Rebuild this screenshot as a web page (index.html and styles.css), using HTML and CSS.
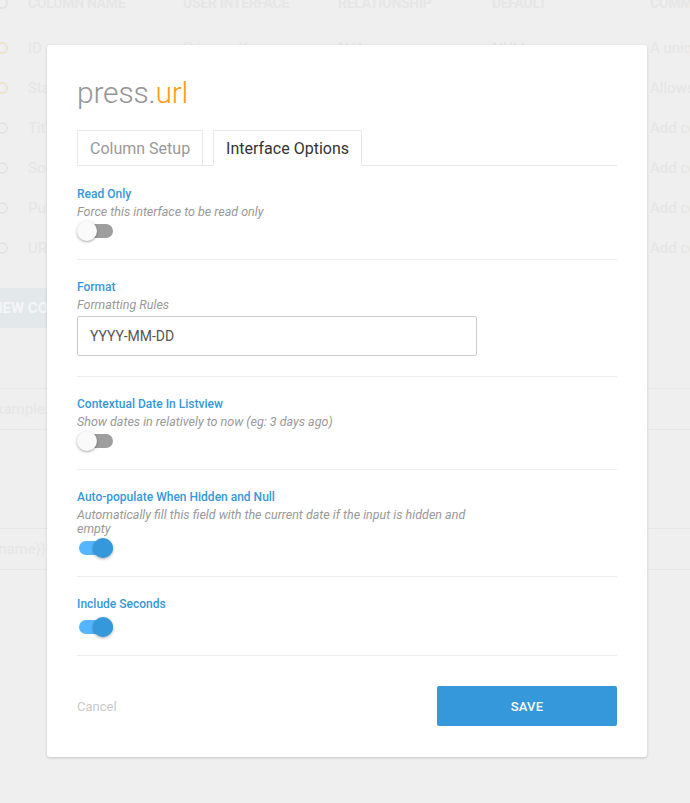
FILE: index.html
```html
<!DOCTYPE html>
<html>
<head>
<meta charset="utf-8">
<link rel="stylesheet" href="styles.css">
</head>
<body>
<div class="page">
  <div class="grid head">
    <span class="ic"></span><span>Column Name</span><span>User Interface</span><span>Relationship</span><span>Default</span><span>Comment</span>
  </div>
  <div class="rows">
    <div class="grid row"><span class="ic key"></span><span>ID</span><span>Primary Key</span><span>N/A</span><span>NULL</span><span>A unique identifier</span></div>
    <div class="grid row"><span class="ic key"></span><span>Status</span><span>Status</span><span>N/A</span><span>1</span><span>Allows items to be</span></div>
    <div class="grid row"><span class="ic eye"></span><span>Title</span><span>Text Input</span><span>N/A</span><span>NULL</span><span>Add comment</span></div>
    <div class="grid row"><span class="ic eye"></span><span>Source</span><span>Text Input</span><span>N/A</span><span>NULL</span><span>Add comment</span></div>
    <div class="grid row"><span class="ic eye"></span><span>Published</span><span>Date</span><span>N/A</span><span>NULL</span><span>Add comment</span></div>
    <div class="grid row"><span class="ic eye"></span><span>URL</span><span>Text Input</span><span>N/A</span><span>NULL</span><span>Add comment</span></div>
  </div>
  <div class="newcol">New Column</div>
  <div class="bgfield first"><span>example.com</span></div>
  <div class="bgfield second"><span>{{name}} ({{id}})</span></div>
</div>

<div class="modal">
  <h1 class="title"><span class="t-main">press.</span><span class="t-accent">url</span></h1>
  <div class="tabs">
    <div class="tab">Column Setup</div>
    <div class="tab active">Interface Options</div>
  </div>
  <div class="form">
    <div class="section">
      <div class="label">Read Only</div>
      <div class="desc">Force this interface to be read only</div>
      <div class="toggle"><span class="track"></span><span class="knob"></span></div>
    </div>
    <div class="section">
      <div class="label">Format</div>
      <div class="desc">Formatting Rules</div>
      <div class="input">YYYY-MM-DD</div>
    </div>
    <div class="section">
      <div class="label">Contextual Date In Listview</div>
      <div class="desc">Show dates in relatively to now (eg: 3 days ago)</div>
      <div class="toggle"><span class="track"></span><span class="knob"></span></div>
    </div>
    <div class="section">
      <div class="label">Auto-populate When Hidden and Null</div>
      <div class="desc narrow">Automatically fill this field with the current date if the input is hidden and empty</div>
      <div class="toggle on"><span class="track"></span><span class="knob"></span></div>
    </div>
    <div class="section">
      <div class="label">Include Seconds</div>
      <div class="toggle on"><span class="track"></span><span class="knob"></span></div>
    </div>
  </div>
  <div class="footer">
    <span class="cancel">Cancel</span>
    <span class="save">SAVE</span>
  </div>
</div>
</body>
</html>
```

FILE: styles.css
```css
* { box-sizing: border-box; }
html, body { margin: 0; padding: 0; }
body {
  background: #efefef;
  font-family: Roboto, "Liberation Sans", sans-serif;
  width: 690px;
  height: 803px;
  overflow: hidden;
  position: relative;
}

/* faint background page */
.page { color: #e6e6e6; font-size: 14px; }
.grid {
  display: grid;
  grid-template-columns: 28px 155px 155px 154px 158px 200px;
  align-items: center;
  white-space: nowrap;
}
.head {
  margin-top: -10px;
  height: 26px;
  text-transform: uppercase;
  font-weight: 700;
  letter-spacing: -0.3px;
}
.rows { margin-top: 12px; }
.row { height: 40px; font-size: 15px; }
.ic { width: 12px; height: 12px; margin-left: -4px; border-radius: 50%; border: 2px solid #e4e4e4; }
.ic.key { border-color: #f0e4cc; }
.newcol {
  margin-top: 20px;
  margin-left: -30px;
  width: 190px;
  height: 40px;
  line-height: 40px;
  padding-left: 22px;
  background: #e3e8eb;
  color: #f3f5f7;
  font-weight: 700;
  text-transform: uppercase;
  font-size: 15px;
}
.bgfield {
  height: 42px;
  border-top: 1px solid #e7e7e7;
  border-bottom: 1px solid #e7e7e7;
  display: flex;
  align-items: center;
  margin-left: -12px;
  font-size: 15px;
}
.bgfield.first { margin-top: 60px; }
.bgfield.second { margin-top: 98px; }

/* modal */
.modal {
  position: absolute;
  left: 47px;
  top: 45px;
  width: 600px;
  background: #fff;
  border-radius: 3px;
  box-shadow: 0 1px 3px rgba(0,0,0,0.18);
  padding: 31px 30px 31px;
}
.title {
  margin: 0;
  font-size: 30px;
  line-height: 34px;
  font-weight: 300;
  letter-spacing: -0.2px;
}
.t-main { color: #959595; }
.t-accent { color: #ff9d14; }

.tabs {
  margin-top: 20px;
  display: flex;
  gap: 10px;
  border-bottom: 1px solid #e8e8e8;
  height: 36px;
}
.tab {
  height: 36px;
  padding: 0 12px;
  border: 1px solid #e8e8e8;
  display: flex;
  align-items: center;
  font-size: 16px;
  color: #999;
  margin-bottom: -1px;
  background: #fff;
}
.tab.active { color: #333; border-bottom-color: #fff; }

.form { margin-top: 1px; }
.section {
  padding: 20px 0 16px;
  border-bottom: 1px solid #eee;
}
.label {
  font-size: 12px;
  line-height: 14px;
  font-weight: 500;
  color: #3498db;
  margin-bottom: 4px;
}
.desc {
  font-size: 12.5px;
  line-height: 14px;
  font-style: italic;
  color: #999;
}
.desc.narrow { max-width: 400px; }
.input {
  margin: 4px 0 4px;
  width: 400px;
  height: 40px;
  border: 1px solid #ccc;
  border-radius: 2px;
  padding: 0 12px;
  display: flex;
  align-items: center;
  font-size: 14px;
  color: #555;
}
.toggle {
  position: relative;
  width: 36px;
  height: 24px;
  display: flex;
  align-items: center;
}
.track {
  margin-left: 2px;
  width: 34px;
  height: 14px;
  border-radius: 7px;
  background: #9e9e9e;
}
.knob {
  position: absolute;
  left: 0;
  top: 2px;
  width: 20px;
  height: 20px;
  border-radius: 50%;
  background: #fafafa;
  box-shadow: 0 1px 3px rgba(0,0,0,0.35);
}
.toggle.on .track { background: #55b6ff; }
.toggle.on .knob { left: 16px; background: #3498db; }

.footer {
  padding-top: 30px;
  display: flex;
  justify-content: space-between;
  align-items: center;
}
.cancel { font-size: 13px; color: #c8c8c8; }
.save {
  width: 180px;
  height: 40px;
  border-radius: 2px;
  background: #3498db;
  color: #fff;
  font-size: 13px;
  font-weight: 500;
  display: flex;
  align-items: center;
  justify-content: center;
  letter-spacing: 0.2px;
}
```
